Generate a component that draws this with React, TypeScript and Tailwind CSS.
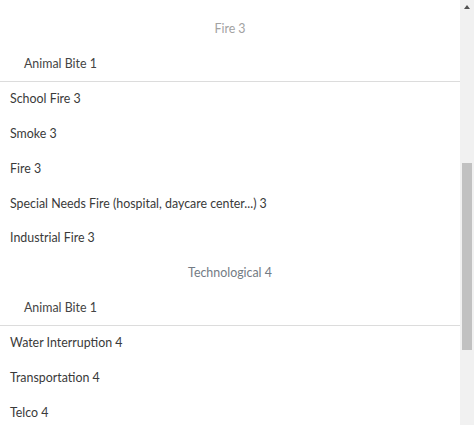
import React from 'react'

type Row = { label: string; kind: 'group' | 'sub' | 'item'; muted?: boolean }

const rows: Row[] = [
    { label: 'Fire 3', kind: 'group', muted: true },
    { label: 'Animal Bite 1', kind: 'sub' },
    { label: 'School Fire 3', kind: 'item' },
    { label: 'Smoke 3', kind: 'item' },
    { label: 'Fire 3', kind: 'item' },
    { label: 'Special Needs Fire (hospital, daycare center...) 3', kind: 'item' },
    { label: 'Industrial Fire 3', kind: 'item' },
    { label: 'Technological 4', kind: 'group' },
    { label: 'Animal Bite 1', kind: 'sub' },
    { label: 'Water Interruption 4', kind: 'item' },
    { label: 'Transportation 4', kind: 'item' },
    { label: 'Telco 4', kind: 'item' },
]

function ListRow({ row }: { row: Row }) {
    if (row.kind === 'group') {
        return (
            <div
                className={`h-[34.9px] flex items-center justify-center ${row.muted ? 'text-[#a2a2a2]' : 'text-[#737b84]'}`}
            >
                {row.label}
            </div>
        )
    }
    if (row.kind === 'sub') {
        return (
            <div className="h-[34.9px] flex items-center pl-6 border-b border-[#dcdcdc] text-[#444]">
                {row.label}
            </div>
        )
    }
    return <div className="h-[34.9px] flex items-center pl-2.5 text-[#3a3a3a]">{row.label}</div>
}

export default function App() {
    return (
        <div className="w-[474px] h-[425px] flex bg-white overflow-hidden font-['Lato',sans-serif] text-[12.4px]">
            <div className="flex-1 pt-[12px]">
                {rows.map((row, i) => (
                    <ListRow key={i} row={row} />
                ))}
            </div>
            <div className="w-[14px] h-full bg-[#f1f1f1] flex flex-col items-center">
                <div className="h-[14px] w-full flex items-center justify-center">
                    <div className="w-0 h-0 border-l-[3.5px] border-r-[3.5px] border-b-[4px] border-l-transparent border-r-transparent border-b-[#505050]" />
                </div>
                <div className="h-[149px]" />
                <div className="w-[10px] h-[187px] bg-[#c1c1c1]" />
            </div>
        </div>
    )
}
